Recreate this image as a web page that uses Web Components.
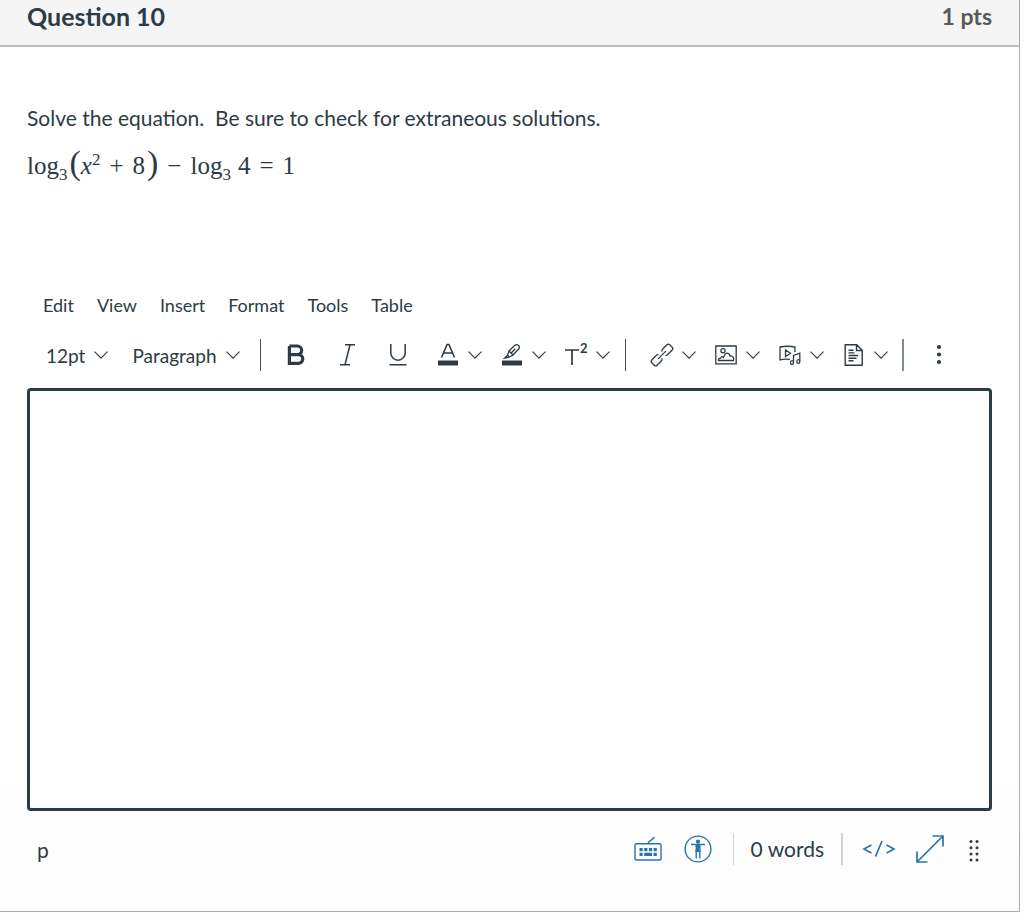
<!DOCTYPE html>
<html lang="en">
<head>
<meta charset="utf-8">
<meta name="viewport" content="width=device-width, initial-scale=1">
<title>Question 10</title>
<style>
  body {
    margin: 0;
    padding-right: 4px;
    background: #fdfdfd;
    color: #2d3b45;
    font-family: Lato, "Liberation Sans", sans-serif;
  }

  p {
    margin: 0;
    font-size: 21px;
    line-height: 32px;
  }
</style>
</head>
<body>

<quiz-question>
  <span slot="name">Question 10</span>
  <span slot="points">1 pts</span>
  <p>Solve the equation.&nbsp; Be sure to check for extraneous solutions.</p>
  <log-equation></log-equation>
  <rich-editor slot="answer"></rich-editor>
</quiz-question>

<template id="template-question">
  <style>
    :host {
      display: block;
      background: linear-gradient(#fff 85%, #fcfcfc);
      border: 1px solid #aaa;
      border-width: 0 1px 1px 0;
      box-shadow: 0 1px 0 #e8e8e8;
    }

    header {
      display: flex;
      justify-content: space-between;
      align-items: center;
      padding: 0 27px 12px;
      background: #f5f5f5;
      border-bottom: 2px solid #bbb;
      line-height: 33px;
    }

    h2 {
      margin: 0;
      font-size: 25px;
      font-weight: bold;
    }

    .points {
      font-size: 23px;
      font-weight: bold;
      color: #595959;
    }

    .text {
      padding: 55px 27px 0;
    }

    .answer {
      padding: 105px 27px 42px;
    }
  </style>
  <header>
    <h2><slot name="name"></slot></h2>
    <span class="points"><slot name="points"></slot></span>
  </header>
  <div class="text"><slot></slot></div>
  <div class="answer"><slot name="answer"></slot></div>
</template>

<template id="template-equation">
  <style>
    :host {
      display: flex;
      align-items: baseline;
      padding-top: 12px;
      font-family: "Liberation Serif", serif;
      font-size: 25px;
      line-height: 40px;
    }

    sub, sup {
      font-size: 17px;
      line-height: 0;
    }

    sub {
      vertical-align: -6px;
    }

    sup {
      vertical-align: 9px;
    }

    .paren {
      padding-left: 2px;
      font-size: 34px;
      line-height: 0;
    }

    .op {
      padding: 0 9px;
    }

    .arg {
      padding-left: 7px;
    }
  </style>
  <span>log<sub>3</sub></span>
  <span class="paren">(</span>
  <span><i>x</i><sup>2</sup></span>
  <span class="op">+</span>
  <span>8</span>
  <span class="paren">)</span>
  <span class="op">−</span>
  <span>log<sub>3</sub></span>
  <span class="arg">4</span>
  <span class="op">=</span>
  <span>1</span>
</template>

<template id="template-editor">
  <style>
    :host {
      display: block;
    }

    nav {
      display: flex;
      gap: 23px;
      padding: 0 16px;
    }

    nav button {
      padding: 0;
      border: 0;
      background: none;
      color: inherit;
      font: inherit;
      font-size: 18px;
      line-height: 28px;
      cursor: pointer;
    }

    .toolbar {
      display: flex;
      align-items: center;
      height: 32px;
      padding: 20px 0 17px;
    }

    .group {
      display: flex;
      align-items: center;
      height: 32px;
    }

    .selects {
      gap: 24px;
      padding: 0 20px 0 19px;
    }

    .format {
      padding: 0 0 0 10px;
      border-left: 1px solid #44525c;
    }

    .menus {
      padding: 0 5px 0 4px;
    }

    .insert {
      padding: 0 4px 0 16px;
      border-left: 1px solid #44525c;
    }

    .more {
      padding-left: 10px;
      border-left: 2px solid #7f8b95;
    }

    textarea {
      display: block;
      box-sizing: border-box;
      width: 100%;
      height: 423px;
      padding: 12px;
      border: 3px solid #2d3b45;
      border-radius: 4px;
      background: #fff;
      color: inherit;
      font: inherit;
      font-size: 21px;
      outline: 0;
      resize: none;
    }

    .status {
      display: flex;
      justify-content: space-between;
      align-items: center;
      height: 32px;
      padding: 22px 8px 4px 10px;
      font-size: 21px;
    }

    .tools {
      display: flex;
      align-items: center;
      --icon-color: #2b74a8;
    }

    .keys {
      display: flex;
      gap: 22px;
      padding-right: 21px;
    }

    .words {
      padding: 0 17px;
      border: 2px solid #d0d3d6;
      border-width: 0 2px 0 1px;
      line-height: 32px;
    }

    .view {
      display: flex;
      gap: 20px;
      padding-left: 19px;
    }

    .grip {
      --icon-color: #2d3b45;
    }
  </style>
  <nav aria-label="Editor menu">
    <button type="button">Edit</button>
    <button type="button">View</button>
    <button type="button">Insert</button>
    <button type="button">Format</button>
    <button type="button">Tools</button>
    <button type="button">Table</button>
  </nav>
  <div class="toolbar" role="toolbar">
    <div class="group selects">
      <tool-select label="Font size" options="12pt,8pt,10pt,14pt,18pt"></tool-select>
      <tool-select label="Block style" options="Paragraph,Heading 2,Heading 3"></tool-select>
    </div>
    <div class="group format">
      <tool-button icon="bold" label="Bold"></tool-button>
      <tool-button icon="italic" label="Italic"></tool-button>
      <tool-button icon="underline" label="Underline"></tool-button>
    </div>
    <div class="group menus">
      <tool-button icon="color" label="Text color" menu></tool-button>
      <tool-button icon="highlight" label="Background color" menu></tool-button>
      <tool-button icon="superscript" label="Superscript" menu></tool-button>
    </div>
    <div class="group insert">
      <tool-button icon="link" label="Links" menu></tool-button>
      <tool-button icon="image" label="Images" menu></tool-button>
      <tool-button icon="media" label="Media" menu></tool-button>
      <tool-button icon="document" label="Documents" menu></tool-button>
    </div>
    <div class="group more">
      <tool-button icon="more" label="More"></tool-button>
    </div>
  </div>
  <textarea aria-label="Answer"></textarea>
  <div class="status">
    <span>p</span>
    <div class="tools">
      <div class="keys">
        <tool-button icon="keyboard" label="Keyboard shortcuts" plain></tool-button>
        <tool-button icon="accessibility" label="Accessibility checker" plain></tool-button>
      </div>
      <span class="words">0 words</span>
      <div class="view">
        <tool-button icon="code" label="HTML editor" plain></tool-button>
        <tool-button icon="fullscreen" label="Fullscreen" plain></tool-button>
        <tool-button class="grip" icon="grip" label="Resize" plain></tool-button>
      </div>
    </div>
  </div>
</template>

<script>
// [width, height, markup]
const ICONS = {
  chevron: [14, 8, '<path d="M.5 .7 7 7.2 13.5 .7" stroke-width="1.1"/>'],
  bold: [22, 22, '<path d="M4.4 2h8a4.2 4.2 0 0 1 0 8.6h-8M4.400 10.6h9a4.3 4.3 0 0 1 0 8.8h-9V2" stroke-width="3.2"/>'],
  italic: [22, 22, '<path d="M9 .8h10M4 20.8h10M14 .8 9 20.8" stroke-width="1.5"/>'],
  underline: [22, 22, '<path d="M3.800 0v9a7.200 7.200 0 0 0 14.400 0V0M2.500 20.700h17" stroke-width="1.5"/>'],
  color: [22, 22, '<path d="m4.500 13.500 5.600-13h1.800l5.600 13M6.600 9h8.800" stroke-width="1.6"/><path class="fill" d="M1 16.500h20v5H1z"/>'],
  highlight: [22, 22, '<path d="M8 7 13.800 1.200Q15.500 0 17.400 1.300 19 3 17.900 4.800L12 11zM8 7 6.500 11.300 3.600 14.200 8.200 13.200 12 11M6.500 11.300l1.700 1.900M10.500 8.700l3.800-3.900" stroke-width="1.3"/><path class="fill" d="M1 16.500h20v5H1z"/>'],
  superscript: [22, 22, '<path d="M0 6h14M7 6v15" stroke-width="1.7"/><text x="15" y="9">2</text>'],
  link: [22, 22, '<g transform="rotate(-45 11 11)" stroke-width="1.3"><path d="M8.500 8.500Q8.500 7.300 6.500 7.300H.3Q-1.700 7.300-1.700 9.300v3.400q0 2 2 2h6q2 0 2.200-1.500M13.500 13.500q0 1.200 2 1.200h6.200q2 0 2-2V9.300q0-2-2-2h-6q-2 0-2.200 1.500M5.500 11h11"/></g>'],
  image: [22, 22, '<path d="M.8 2h20.400v17.800H.8zM3.500 16.500h15c.8-3-1.300-5-3.500-4.500-1.300-4-4.600-3.500-5.600-.5l-1 2c-1-1.500-2.300-1-2.700.6-1.600-.1-2.300 1-2.200 2.400z" stroke-width="1.3"/><circle cx="8" cy="6.7" r="2.1" stroke-width="1.3"/>'],
  media: [22, 22, '<path d="M11 15.300Q5 14.800 1 16V3q7.500-1.500 15 0v5M6.500 6v6.500l5-3.200z" stroke-width="1.3"/><path d="M14.500 18.500v-7l6.300-2.300v8.300" stroke-width="1.3"/><ellipse cx="13" cy="18.600" rx="1.500" ry="1.900" stroke-width="1.3"/><ellipse cx="19.300" cy="17.500" rx="1.500" ry="1.900" stroke-width="1.3"/>'],
  document: [22, 22, '<path d="M2.200 .8h11.500l5.500 5.500v14.900h-17zM13.500 .8v5.700h5.700M5.500 6.200h5M5.500 8.900h6M5.500 11.500h9.500M5.500 14.200h8M5.500 16.800h5" stroke-width="1.4"/>'],
  more: [22, 22, '<g class="fill"><circle cx="11" cy="3" r="2.1"/><circle cx="11" cy="10.500" r="2.1"/><circle cx="11" cy="18" r="2.1"/></g>'],
  keyboard: [28, 28, '<rect x="1" y="8.700" width="26" height="16.300" rx="1.500" stroke-width="1.4"/><path d="M14 8.500c.2-2.800 5-2.800 6-6.500" stroke-width="1.5"/><g class="fill"><path d="M5.500 13h3.200v3.200H5.500zM10.200 13h3.200v3.200h-3.200zM14.900 13h3.200v3.200h-3.200zM19.600 13h3.200v3.200h-3.200zM5.500 17.800h3.200V21H5.500zM10.200 17.800h7.900V21h-7.900zM19.600 17.800h3.200V21h-3.200z"/></g>'],
  accessibility: [28, 28, '<circle cx="14" cy="14" r="12.900" stroke-width="1.4"/><path d="M7 9.500h14" stroke-width="1.5"/><g class="fill"><circle cx="14" cy="6.700" r="2.100"/><path d="M11.500 9.500h5v7.500h-5z"/></g><path d="M12.200 15v8.500M15.800 15v8.500" stroke-width="1.400"/>'],
  code: [34, 28, '<path d="M9.500 10 2 14l7.500 4M13.500 21.500 20 6M24.500 10l7.500 4-7.500 4" stroke-width="1.7"/>'],
  fullscreen: [28, 28, '<path d="M1 27 27 1M16.500 1H27v10.500M1 16.500V27h10.500" stroke-width="1.7"/>'],
  grip: [20, 28, '<g class="fill">' + [6.5, 12.7, 18.9, 25.1].map((y) =>
    `<circle cx="7" cy="${y}" r="1.5"/><circle cx="13" cy="${y}" r="1.5"/>`).join("") + "</g>"],
};

function icon(name) {
  const [width, height, markup] = ICONS[name];
  return `<svg class="${name}" width="${width}" height="${height}" viewBox="0 0 ${width} ${height}" aria-hidden="true">${markup}</svg>`;
}

const ICON_STYLES = `
  svg {
    display: block;
    flex: none;
    fill: none;
    stroke: var(--icon-color, #2d3b45);
    overflow: visible;
  }

  .fill, text {
    fill: var(--icon-color, #2d3b45);
    stroke: none;
  }

  text {
    font: bold 13px Lato, sans-serif;
  }
`;

function cloneInto(element, id) {
  element.attachShadow({ mode: "open" });
  element.shadowRoot.appendChild(document.getElementById(id).content.cloneNode(true));
}

class ToolButton extends HTMLElement {
  constructor() {
    super();
    this.attachShadow({ mode: "open" });
  }

  connectedCallback() {
    const menu = this.hasAttribute("menu");
    this.shadowRoot.innerHTML = `
      <style>
        :host {
          display: block;
        }

        button {
          display: flex;
          align-items: center;
          justify-content: center;
          gap: 9px;
          box-sizing: border-box;
          width: 51px;
          height: 32px;
          padding: 0;
          border: 0;
          background: none;
          cursor: pointer;
        }

        :host([menu]) button {
          justify-content: flex-start;
          width: 64px;
          padding-left: 9px;
        }

        :host([plain]) button {
          width: auto;
        }

        ${ICON_STYLES}
      </style>
      <button type="button" ${menu ? 'aria-haspopup="true"' : ""}>
        ${icon(this.getAttribute("icon"))}${menu ? icon("chevron") : ""}
      </button>
    `;
    this.shadowRoot.querySelector("button").setAttribute("aria-label", this.getAttribute("label"));
  }
}

class ToolSelect extends HTMLElement {
  constructor() {
    super();
    this.attachShadow({ mode: "open" });
  }

  connectedCallback() {
    const options = this.getAttribute("options").split(",");
    this.shadowRoot.innerHTML = `
      <style>
        :host {
          display: block;
        }

        label {
          display: grid;
          align-items: center;
        }

        select, svg {
          grid-area: 1 / 1;
        }

        select {
          appearance: none;
          field-sizing: content;
          height: 32px;
          padding: 0 23px 0 0;
          border: 0;
          background: none;
          color: inherit;
          font: inherit;
          font-size: 19px;
        }

        ${ICON_STYLES}

        svg {
          justify-self: end;
          pointer-events: none;
        }
      </style>
      <label>
        <select>${options.map((o) => `<option>${o}</option>`).join("")}</select>
        ${icon("chevron")}
      </label>
    `;
    this.shadowRoot.querySelector("select").setAttribute("aria-label", this.getAttribute("label"));
  }
}

class LogEquation extends HTMLElement {
  constructor() {
    super();
    cloneInto(this, "template-equation");
  }
}

class RichEditor extends HTMLElement {
  constructor() {
    super();
    cloneInto(this, "template-editor");
  }
}

class QuizQuestion extends HTMLElement {
  constructor() {
    super();
    cloneInto(this, "template-question");
  }
}

customElements.define("tool-button", ToolButton);
customElements.define("tool-select", ToolSelect);
customElements.define("log-equation", LogEquation);
customElements.define("rich-editor", RichEditor);
customElements.define("quiz-question", QuizQuestion);
</script>
</body>
</html>
